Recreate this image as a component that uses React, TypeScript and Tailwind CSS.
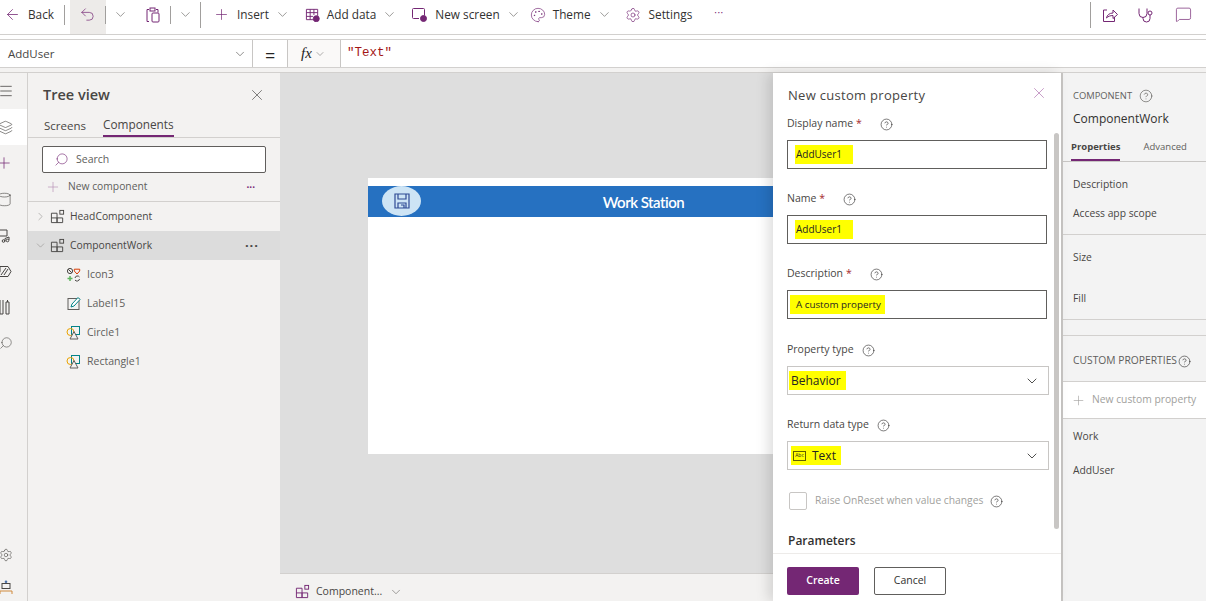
import { ReactNode } from "react";
import {
  ArrowLeft,
  ChevronDown,
  ChevronRight,
  CircleHelp,
  Cylinder,
  Layers,
  Menu,
  MessageSquare,
  Palette,
  Plus,
  Search,
  Settings,
  Undo2,
  X,
} from "lucide-react";

const purple = "#742774";

const Chevron = ({ className = "ml-2" }: { className?: string }) => (
  <ChevronDown size={15} strokeWidth={1} className={`text-[#605e5c] ${className}`} />
);

const ComponentIcon = ({ color = "#484644", size = 16 }: { color?: string; size?: number }) => (
  <svg width={size} height={size} viewBox="0 0 16 16" fill="none" stroke={color} strokeWidth="1">
    <path d="M1.500 4.500h6v10h-6zM7.500 9.500h6v5h-6zM1.500 9.500h6" />
    <rect x="10.500" y="1.500" width="4" height="4" />
  </svg>
);

const ShapesIcon = () => (
  <svg width="16" height="16" viewBox="0 0 16 16" fill="none">
    <rect x="5.500" y="1.500" width="8" height="8" stroke="#038387" />
    <circle cx="4.500" cy="7" r="3.500" stroke="#eaa300" />
    <path d="M8 6.500l4 7.500H4z" fill="#f3f2f1" stroke="#605e5c" />
  </svg>
);

const IconsIcon = () => (
  <svg width="16" height="16" viewBox="0 0 16 16" fill="none">
    <circle cx="4" cy="4" r="2.600" stroke="#484644" />
    <path d="M2.200 2.200l3.600 3.600" stroke="#484644" />
    <path d="M11 7l-2.700-3V2.200h5.400V4z" stroke="#d83b01" />
    <path d="M4 9v5M1.500 11.500h5" stroke="#5fb35f" strokeWidth="1.500" />
    <path d="M9 11a2.500 2.500 0 0 1 4.500-1M13.500 12a2.500 2.500 0 0 1-4.500 1" stroke="#484644" />
  </svg>
);

const LabelIcon = () => (
  <svg width="16" height="16" viewBox="0 0 16 16" fill="none">
    <rect x="2" y="2.500" width="11" height="11" stroke="#605e5c" />
    <path d="M5 11l1-3 6-6.500 2 2-6 6.500z" fill="#fff" stroke="#038387" />
  </svg>
);

const Divider = ({ className = "" }: { className?: string }) => <div className={`w-px bg-[#a19f9d] ${className}`} />;

const Help = ({ className = "" }: { className?: string }) => (
  <CircleHelp size={13} strokeWidth={1.100} className={`text-[#252423] ${className}`} />
);

const RailItem = ({ children, active = false }: { children: ReactNode; active?: boolean }) => (
  <div className={`flex h-[36px] w-[27px] shrink-0 items-center ${active ? "bg-white" : ""}`}>{children}</div>
);

const TreeChild = ({ icon, label }: { icon: ReactNode; label: string }) => (
  <div className="flex h-[29px] items-center pl-[66px] text-[10.500px] text-[#605e5c]">
    <span className="w-[21px]">{icon}</span>
    {label}
  </div>
);

const Field = ({
  label,
  value,
  help,
  pad = "px-[2px]",
  textSize = "text-[10px]",
  boxPad = "pl-[7px]",
  className = "",
}: {
  label: string;
  value: string;
  help: string;
  pad?: string;
  textSize?: string;
  boxPad?: string;
  className?: string;
}) => (
  <div className={className}>
    <div className="flex h-[16px] items-center text-[10.500px] text-[#484644]">
      {label}
      <span className="ml-[3px] text-[#a4262c]">*</span>
      <Help className={help} />
    </div>
    <div className={`mt-[8px] flex h-[29px] w-[260px] items-center border border-[#605e5c] ${boxPad}`}>
      <span className={`bg-[#ffff00] py-[2px] leading-[15px] text-[#252423] ${pad} ${textSize}`}>{value}</span>
    </div>
  </div>
);

const SelectField = ({ label, help, children, className = "" }: { label: string; help: string; children: ReactNode; className?: string }) => (
  <div className={className}>
    <div className="flex h-[16px] items-center text-[10.500px] text-[#484644]">
      {label}
      <Help className={help} />
    </div>
    <div className="mt-[8px] flex h-[29px] w-[262px] items-center justify-between border border-[#c8c6c4] pl-[1px] pr-[8px]">
      {children}
      <ChevronDown size={16} strokeWidth={1.200} className="text-[#252423]" />
    </div>
  </div>
);

export default function App() {
  return (
    <div className="flex h-[601px] w-[1206px] flex-col overflow-hidden bg-white text-[#252423] [font-family:'Open_Sans',sans-serif]">
      {/* command bar */}
      <div className="flex h-[35px] shrink-0 items-center border-b border-[#d2d0ce] pb-[5px] text-[11.800px] text-[#323130]">
        <ArrowLeft size={17} strokeWidth={1.100} color={purple} className="ml-[4px]" />
        <span className="ml-[7px]">Back</span>
        <Divider className="ml-[10px] h-[20px]" />
        <div className="-mb-[5px] ml-[5px] flex h-[34px] w-[36px] items-center justify-center bg-[#edebe9] pb-[5px]">
          <Undo2 size={17} strokeWidth={1} color={purple} className="-ml-[2px]" />
        </div>
        <Divider className="-ml-[1px] h-[18px]" />
        <Chevron className="ml-[7px]" />
        <svg width="16" height="16" viewBox="0 0 16 16" fill="none" stroke={purple} className="ml-[17px]">
          <path d="M4 14.500H2V2.500h2M11 2.500h2v3" />
          <rect x="5" y="1" width="5" height="3" />
          <rect x="7" y="6" width="7" height="9" rx="1" />
        </svg>
        <Divider className="ml-[9px] h-[18px]" />
        <Chevron className="ml-[7px]" />
        <Divider className="ml-[7px] h-[26px]" />
        <Plus size={17} strokeWidth={1} color={purple} className="ml-[12px]" />
        <span className="ml-[7px]">Insert</span>
        <Chevron className="ml-[6px]" />
        <svg width="15" height="15" viewBox="0 0 16 16" fill="none" stroke={purple} className="ml-[15px]">
          <path d="M1.500 2.500h12v7M1.500 2.500v11h7M1.500 6h12M5.500 2.500v11M9.500 2.500v6M1.500 10h7" />
          <circle cx="12" cy="12.500" r="3.200" fill={purple} />
        </svg>
        <span className="ml-[7px]">Add data</span>
        <Chevron className="ml-[6px]" />
        <svg width="16" height="15" viewBox="0 0 16 15" fill="none" stroke={purple} className="ml-[14px]">
          <path d="M8 11.500H2.500a1 1 0 0 1-1-1v-8a1 1 0 0 1 1-1h10a1 1 0 0 1 1 1v6" />
          <circle cx="12.500" cy="11.500" r="3" fill={purple} />
        </svg>
        <span className="ml-[8px]">New screen</span>
        <Chevron className="ml-[6px]" />
        <Palette size={16} strokeWidth={1} color={purple} className="ml-[9px]" />
        <span className="ml-[7px]">Theme</span>
        <Chevron className="ml-[6px]" />
        <Settings size={16} strokeWidth={1} color={purple} className="ml-[13px]" />
        <span className="ml-[8px]">Settings</span>
        <span className="-mt-[5px] ml-[22px] text-[10px] tracking-[0.5px]" style={{ color: purple }}>
          ···
        </span>
        <div className="ml-auto flex items-center">
          <Divider className="h-[26px]" />
          <svg width="16" height="16" viewBox="0 0 16 16" fill="none" stroke={purple} className="ml-[11px]">
            <path d="M5 3H1.500v11.500h11V10" />
            <path d="M4.500 11c.5-3 3-5 6.500-5V3l4.500 4.500L11 11.500V8.500c-2.500 0-5 .8-6.500 2.500z" />
          </svg>
          <svg width="16" height="16" viewBox="0 0 16 16" fill="none" stroke={purple} className="ml-[20px]">
            <path d="M1 1.500v5a4 4 0 0 0 8 0v-5M5 10.500v1a3.500 3.500 0 0 0 7 0V8" />
            <circle cx="12" cy="6" r="2" />
          </svg>
          <MessageSquare size={17} strokeWidth={1} color={purple} className="ml-[21px] mr-[14px]" />
        </div>
      </div>

      {/* formula bar */}
      <div className="shrink-0 pt-[4px]">
        <div className="flex h-[29px] items-stretch border-y border-[#d2d0ce]">
          <div className="flex w-[253px] items-center justify-between border-r border-[#c8c6c4] pl-[8px] pr-[5px] text-[11.500px] text-[#484644]">
            AddUser
            <ChevronDown size={14} strokeWidth={1.200} className="text-[#605e5c]" />
          </div>
          <div className="ml-[12px] mt-[6px] w-[22px] text-[18px] leading-[18px] text-[#252423]">=</div>
          <div className="flex w-[54px] items-center border-x border-[#c8c6c4] bg-[#faf9f8] pl-[13px] [font-family:'Liberation_Serif',serif] text-[15px] italic text-[#252423]">
            fx
            <ChevronDown size={12} strokeWidth={1} className="ml-[2px] text-[#605e5c]" />
          </div>
          <div className="flex flex-1 items-center pl-[6px] [font-family:'Liberation_Mono',monospace] text-[12.500px] text-[#a31515]">"Text"</div>
        </div>
        <div className="h-[5px] border-b border-[#d2d0ce] bg-[#f3f2f1]" />
      </div>

      <div className="flex min-h-0 flex-1">
        {/* rail */}
        <div className="flex w-[28px] shrink-0 flex-col overflow-hidden border-r border-[#d2d0ce] bg-[#f3f2f1]">
          <RailItem>
            <Menu size={16} strokeWidth={1} className="-ml-[2px] text-[#252423]" />
          </RailItem>
          <RailItem active>
            <Layers size={15} strokeWidth={1} className="-ml-[2px] text-[#484644]" />
          </RailItem>
          <RailItem>
            <Plus size={18} strokeWidth={1} color={purple} className="-ml-[5px]" />
          </RailItem>
          <RailItem>
            <Cylinder size={15} strokeWidth={1} className="-ml-[3px] text-[#484644]" />
          </RailItem>
          <RailItem>
            <svg width="15" height="15" viewBox="0 0 15 15" fill="none" stroke="#484644" className="-ml-[3px]">
              <path d="M1 2h9v6H1M8 10.500l4-1.500v3M8 10.500v3" />
              <circle cx="6.500" cy="13" r="1.300" />
              <circle cx="10.500" cy="12.500" r="1.300" />
            </svg>
          </RailItem>
          <RailItem>
            <svg width="15" height="13" viewBox="0 0 15 13" fill="none" stroke="#484644" className="-ml-[3px]">
              <path d="M3 1.500h8l3 5-3 5H1l2-5zM4 10l5-7M7 10l4-6" />
            </svg>
          </RailItem>
          <RailItem>
            <svg width="14" height="16" viewBox="0 0 14 16" fill="none" stroke="#484644" className="-ml-[2px]">
              <path d="M2 1v14h3V1M8 3h3v12H8zM9.500 1v2" />
            </svg>
          </RailItem>
          <RailItem>
            <Search size={14} strokeWidth={1} className="-ml-[1px] -scale-x-100 text-[#484644]" />
          </RailItem>
          <div className="mt-auto">
            <RailItem>
              <Settings size={14} strokeWidth={1} className="-ml-[1px] text-[#484644]" />
            </RailItem>
            <div className="flex h-[28px] items-center">
              <svg width="14" height="15" viewBox="0 0 14 15" fill="none" className="-ml-[1px]">
                <rect x="3" y="3.500" width="8" height="5" stroke="#484644" />
                <circle cx="7" cy="1.800" r="1.300" fill="#4a6fa5" />
                <path d="M1 14v-3h12v3" stroke="#d08a3c" />
              </svg>
            </div>
          </div>
        </div>

        {/* tree view */}
        <div className="flex w-[252px] shrink-0 flex-col bg-[#f3f2f1]">
          <div className="flex h-[36px] shrink-0 items-end justify-between pl-[15px] pr-[14px]">
            <span className="text-[14.500px] font-semibold leading-[29px] text-[#484644]">Tree view</span>
            <X size={18} strokeWidth={0.900} className="mb-[5px] text-[#484644]" />
          </div>
          <div className="flex h-[29px] shrink-0 items-end gap-[17px] border-b border-[#d2d0ce] pl-[16px] text-[11.500px] text-[#484644]">
            <span className="pb-[3px]">Screens</span>
            <span className="border-b-2 pb-[1px] text-[11.800px] font-medium" style={{ borderColor: purple }}>
              Components
            </span>
          </div>
          <div className="ml-[14px] mt-[8px] flex h-[27px] w-[224px] shrink-0 items-center rounded-[2px] border border-[#605e5c] bg-white pl-[11px] text-[10.500px] text-[#605e5c]">
            <Search size={15} strokeWidth={1} color={purple} className="mr-[7px] -scale-x-100" />
            Search
          </div>
          <div className="flex h-[29px] shrink-0 items-center border-b border-[#d2d0ce] pl-[17px] pr-[25px] text-[10.300px] text-[#605e5c]">
            <Plus size={16} strokeWidth={1} color="#b78fb7" />
            <span className="ml-[7px]">New component</span>
            <span className="ml-auto text-[10px] font-bold" style={{ color: purple }}>
              ···
            </span>
          </div>
          <div className="flex h-[29px] shrink-0 items-center pl-[6px] text-[10.300px] text-[#484644]">
            <ChevronRight size={13} strokeWidth={1} className="text-[#8a8886]" />
            <span className="ml-[3px]">
              <ComponentIcon size={15} />
            </span>
            <span className="ml-[5px]">HeadComponent</span>
          </div>
          <div className="flex h-[29px] shrink-0 items-center bg-[#dcdcdc] pl-[6px] pr-[21px] text-[10.300px] text-[#484644]">
            <ChevronDown size={13} strokeWidth={1} className="text-[#8a8886]" />
            <span className="ml-[3px]">
              <ComponentIcon size={15} />
            </span>
            <span className="ml-[5px]">ComponentWork</span>
            <span className="ml-auto text-[13px] font-bold leading-[13px] tracking-[1px] text-[#484644]">···</span>
          </div>
          <div className="-ml-[28px]">
            <TreeChild icon={<IconsIcon />} label="Icon3" />
            <TreeChild icon={<LabelIcon />} label="Label15" />
            <TreeChild icon={<ShapesIcon />} label="Circle1" />
            <TreeChild icon={<ShapesIcon />} label="Rectangle1" />
          </div>
        </div>

        {/* canvas */}
        <div className="flex w-[493px] shrink-0 flex-col bg-[#dedede]">
          <div className="min-h-0 flex-1 pl-[88px] pt-[105px]">
            <div className="h-[276px] w-[405px] bg-white pt-[8px]">
              <div className="relative flex h-[31px] items-center justify-center bg-[#2671c1] pl-[146px] pt-[1px] text-[15px] font-semibold tracking-[-0.5px] text-white [font-family:Lato,sans-serif]">
                <div className="absolute left-[14px] top-0 flex h-[30px] w-[39px] items-center justify-center rounded-[50%] bg-[#cde4f5]">
                  <svg width="16" height="16" viewBox="0 0 16 16" fill="none" stroke="#2f4a94" strokeWidth="1.200">
                    <path d="M1 1h14v14H1zM4 1v5h8V1M4 15V10h8v5M7 12h3v3" />
                  </svg>
                </div>
                Work Station
              </div>
            </div>
          </div>
          <div className="flex h-[28px] shrink-0 items-center border-t border-[#d2d0ce] bg-[#f3f2f1] pl-[15px] pt-[8px] text-[10.500px] text-[#484644]">
            <ComponentIcon color={purple} size={15} />
            <span className="ml-[6px]">Component...</span>
            <ChevronDown size={14} strokeWidth={1} className="ml-[7px] text-[#605e5c]" />
          </div>
        </div>

        {/* new custom property panel */}
        <div className="relative z-10 flex w-[288px] shrink-0 flex-col bg-white shadow-[-5px_0_12px_rgba(0,0,0,0.13)]">
          <div className="min-h-0 flex-1 overflow-hidden pl-[14px]">
            <div className="flex h-[43px] items-start justify-between pr-[13px] pt-[12px]">
              <span className="pl-[1px] text-[13px] leading-[20px] tracking-[0.3px] text-[#484644]">New custom property</span>
              <X size={18} strokeWidth={0.800} color="#a35ca3" className="-mt-[1px]" />
            </div>
            <Field label="Display name" value="AddUser1" help="ml-[18px]" pad="pl-[1px] pr-[11px]" />
            <Field label="Name" value="AddUser1" help="ml-[18px]" pad="pl-[1px] pr-[11px]" className="mt-[22px]" />
            <Field
              label="Description"
              value="A custom property"
              help="ml-[18px]"
              pad="pl-[6px] pr-[4px]"
              boxPad="pl-[2px]"
              textSize="text-[9.800px]"
              className="mt-[22px]"
            />
            <SelectField label="Property type" help="ml-[8px]" className="mt-[23px]">
              <span className="bg-[#ffff00] py-[2px] pl-[2px] pr-[5px] text-[12px] leading-[15px]">Behavior</span>
            </SelectField>
            <SelectField label="Return data type" help="ml-[8px]" className="mt-[22px]">
              <span className="ml-[2px] flex items-center bg-[#ffff00] py-[2px] pl-[2px] pr-[5px] text-[12px] leading-[15px]">
                <span className="mr-[6px] flex h-[10px] w-[13px] items-center justify-center border border-[#605e00] text-[5px] leading-none">Abc</span>
                Text
              </span>
            </SelectField>
            <div className="ml-[2px] mt-[22px] flex h-[18px] items-center text-[10.300px] text-[#a19f9d]">
              <span className="h-[18px] w-[18px] rounded-[2px] border border-[#c8c6c4]" />
              <span className="ml-[8px]">Raise OnReset when value changes</span>
              <Help className="ml-[7px]" />
            </div>
            <div className="mt-[22px] pl-[1px] text-[12px] font-semibold leading-[18px] text-[#323130]">Parameters</div>
          </div>
          <div className="flex h-[48px] shrink-0 items-start gap-[15px] border-t border-[#edebe9] pl-[14px] pt-[13px] text-[10.500px]">
            <div className="flex h-[28px] w-[72px] items-center justify-center rounded-[2px] font-semibold text-white" style={{ backgroundColor: purple }}>
              Create
            </div>
            <div className="flex h-[28px] w-[72px] items-center justify-center rounded-[2px] border border-[#605e5c] text-[#323130]">Cancel</div>
          </div>
          <div className="absolute left-[281px] top-[60px] h-[396px] w-[5px] rounded-[3px] bg-[#c8c6c4]" />
        </div>

        {/* right properties pane */}
        <div className="flex min-w-0 flex-1 flex-col border-l-2 border-[#c8c6c4] bg-[#f3f3f3] text-[10.300px] text-[#484644]">
          <div className="flex h-[46px] shrink-0 flex-col pl-[10px] pt-[16px]">
            <div className="flex h-[18px] items-center text-[9.400px] text-[#605e5c]">
              COMPONENT
              <CircleHelp size={14} strokeWidth={1} className="ml-[7px] text-[#484644]" />
            </div>
            <div className="mt-[7px] text-[12px] leading-[18px] text-[#323130]">ComponentWork</div>
          </div>
          <div className="mt-[16px] flex h-[27px] shrink-0 items-end border-b border-[#c8c6c4] pl-[8px]">
            <span className="border-b-2 pb-[5px] text-[9.500px] font-bold" style={{ borderColor: purple }}>
              Properties
            </span>
            <span className="ml-[23px] pb-[7px] text-[9.500px] text-[#605e5c]">Advanced</span>
          </div>
          <div className="h-[73px] shrink-0 border-b border-[#d2d0ce] pl-[10px] pt-[14px]">
            <div className="leading-[16px]">Description</div>
            <div className="mt-[13px] leading-[16px]">Access app scope</div>
          </div>
          <div className="h-[85px] shrink-0 border-b border-[#d2d0ce] pl-[10px] pt-[14px]">
            <div className="leading-[16px]">Size</div>
            <div className="mt-[25px] leading-[16px]">Fill</div>
          </div>
          <div className="h-[16px] shrink-0 border-b border-[#d2d0ce]" />
          <div className="flex h-[45px] shrink-0 items-center pl-[10px] pt-[5px] text-[#605e5c]">
            CUSTOM PROPERTIES
            <CircleHelp size={13} strokeWidth={1.100} className="ml-[1px] text-[#252423]" />
          </div>
          <div className="flex h-[38px] shrink-0 items-center border-y border-[#d2d0ce] bg-white pl-[8px] text-[#a19f9d]">
            <Plus size={15} strokeWidth={1} />
            <span className="ml-[6px]">New custom property</span>
          </div>
          <div className="ml-[10px] mt-[9px] leading-[16px]">Work</div>
          <div className="ml-[10px] mt-[18px] leading-[16px]">AddUser</div>
        </div>
      </div>
    </div>
  );
}
